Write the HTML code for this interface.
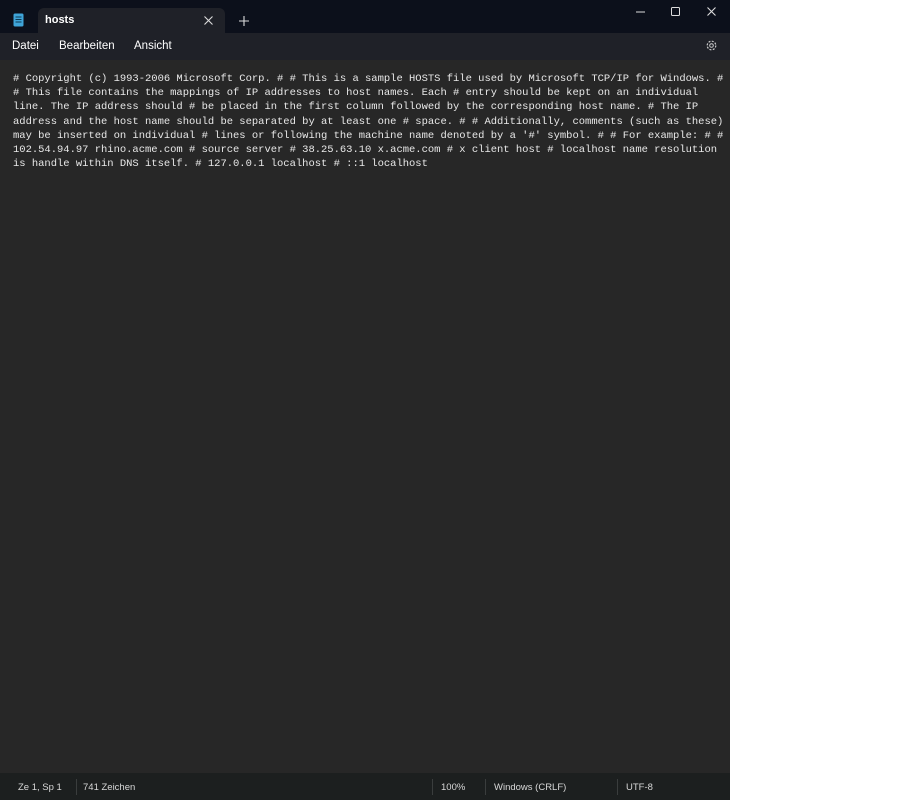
<!DOCTYPE html>
<html><head><meta charset="utf-8"><style>
body{margin:0;width:904px;height:800px;background:#fff;position:relative;overflow:hidden;font-family:"Liberation Sans",sans-serif}
.win{position:absolute;left:0;top:0;width:730px;height:800px;background:#272727;overflow:hidden}
.title{position:absolute;left:0;top:0;width:730px;height:33px;background:#0c101b}
.tab{position:absolute;left:38px;top:8px;width:187px;height:25px;background:#1f2128;border-radius:6px 6px 0 0}
.tab span{position:absolute;left:7px;top:6px;color:#fff;font-size:11px;font-weight:bold}
.menu{position:absolute;left:0;top:33px;width:730px;height:27px;background:#1f2128;color:#fff;font-size:11.5px}
.menu span{position:absolute;top:7px}
pre{position:absolute;left:13px;top:72px;margin:0;font-family:"Liberation Mono",monospace;font-size:10.5px;letter-spacing:-0.015px;line-height:14.2px;color:#e8e8e8}
.status{position:absolute;left:0;top:773px;width:730px;height:27px;background:#1c1f1f;color:#d8d8d8;font-size:9.5px}
.status span{position:absolute;top:9px}
.sep{position:absolute;top:6px;width:1px;height:16px;background:#3a3d3d}
</style></head><body>
<div class="win">
<div class="title">
<svg style="position:absolute;left:13px;top:13px" width="11" height="14"><rect x="0.5" y="0.5" width="10" height="13" rx="1.5" fill="#3fa4d8"/><path d="M2.5 4h6M2.5 6.5h6M2.5 9h6" stroke="#0c3a55" stroke-width="1"/></svg>
<div class="tab"><span>hosts</span>
<svg style="position:absolute;left:166px;top:8px" width="9" height="9"><path d="M0.5 0.5l8 8M8.5 0.5l-8 8" stroke="#ddd" stroke-width="1.1"/></svg></div>
<svg style="position:absolute;left:239px;top:16px" width="10" height="10"><path d="M5 0v10M0 5h10" stroke="#ddd" stroke-width="1.1"/></svg>
<svg style="position:absolute;left:636px;top:11px" width="9" height="2"><path d="M0 1h9" stroke="#ddd"/></svg>
<svg style="position:absolute;left:671px;top:7px" width="10" height="10"><rect x="0.5" y="0.5" width="8" height="8" rx="1" fill="none" stroke="#ddd"/></svg>
<svg style="position:absolute;left:707px;top:7px" width="10" height="10"><path d="M0.5 0.5l8 8M8.5 0.5l-8 8" stroke="#ddd" stroke-width="1.1"/></svg>
</div>
<div class="menu"><span style="left:12px">Datei</span><span style="left:59px">Bearbeiten</span><span style="left:134px">Ansicht</span>
<svg style="position:absolute;left:705px;top:6px" width="13" height="13" viewBox="0 0 13 13"><circle cx="6.5" cy="6.5" r="4.3" fill="none" stroke="#ccc" stroke-width="1.2" stroke-dasharray="2 1.4"/><circle cx="6.5" cy="6.5" r="1.8" fill="none" stroke="#ccc"/></svg></div>
<pre># Copyright (c) 1993-2006 Microsoft Corp. # # This is a sample HOSTS file used by Microsoft TCP/IP for Windows. #
# This file contains the mappings of IP addresses to host names. Each # entry should be kept on an individual
line. The IP address should # be placed in the first column followed by the corresponding host name. # The IP
address and the host name should be separated by at least one # space. # # Additionally, comments (such as these)
may be inserted on individual # lines or following the machine name denoted by a '#' symbol. # # For example: # #
102.54.94.97 rhino.acme.com # source server # 38.25.63.10 x.acme.com # x client host # localhost name resolution
is handle within DNS itself. # 127.0.0.1 localhost # ::1 localhost</pre>
<div class="status"><span style="left:18px">Ze 1, Sp 1</span><div class="sep" style="left:76px"></div><span style="left:83px">741 Zeichen</span><div class="sep" style="left:432px"></div><span style="left:441px">100%</span><div class="sep" style="left:485px"></div><span style="left:494px">Windows (CRLF)</span><div class="sep" style="left:617px"></div><span style="left:626px">UTF-8</span></div>
</div>
</body></html>
